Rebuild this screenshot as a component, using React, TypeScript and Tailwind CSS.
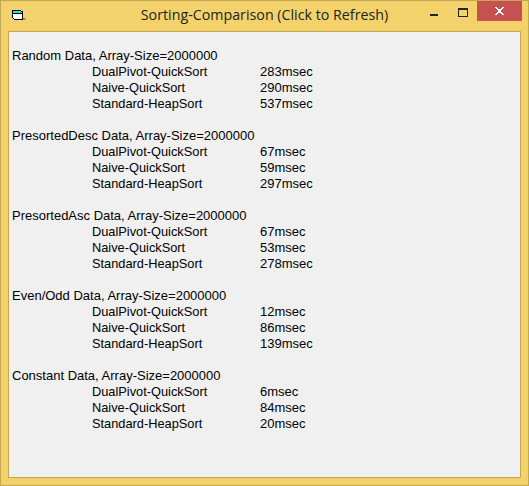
const results = [
  {
    title: 'Random Data, Array-Size=2000000',
    rows: [
      ['DualPivot-QuickSort', '283msec'],
      ['Naive-QuickSort', '290msec'],
      ['Standard-HeapSort', '537msec'],
    ],
  },
  {
    title: 'PresortedDesc Data, Array-Size=2000000',
    rows: [
      ['DualPivot-QuickSort', '67msec'],
      ['Naive-QuickSort', '59msec'],
      ['Standard-HeapSort', '297msec'],
    ],
  },
  {
    title: 'PresortedAsc Data, Array-Size=2000000',
    rows: [
      ['DualPivot-QuickSort', '67msec'],
      ['Naive-QuickSort', '53msec'],
      ['Standard-HeapSort', '278msec'],
    ],
  },
  {
    title: 'Even/Odd Data, Array-Size=2000000',
    rows: [
      ['DualPivot-QuickSort', '12msec'],
      ['Naive-QuickSort', '86msec'],
      ['Standard-HeapSort', '139msec'],
    ],
  },
  {
    title: 'Constant Data, Array-Size=2000000',
    rows: [
      ['DualPivot-QuickSort', '6msec'],
      ['Naive-QuickSort', '84msec'],
      ['Standard-HeapSort', '20msec'],
    ],
  },
];

function AppIcon() {
  return (
    <svg width="14" height="12" viewBox="0 0 14 12" shapeRendering="crispEdges">
      <path d="M1 4h9v5H2V8H1z" fill="#fff" />
      <path d="M1 1h8v1h1v1H1z" fill="#1ee6e6" />
      <path d="M0 0h9v1H0zM0 1h1v7H0zM1 8h1v1H1zM2 9h9v1H2zM9 1h2v1H9zM10 2h1v7h-1zM1 3h9v1H1z" fill="#000" />
      <path d="M11 8h3v1h-1v1h-2z" fill="#8a8a8a" />
    </svg>
  );
}

export default function App() {
  return (
    <div className="flex h-[486px] w-[529px] flex-col border border-[#c3a651] bg-[#f4d26b] font-['Liberation_Sans',sans-serif] text-black">
      <div className="relative flex h-[30px] shrink-0 items-start">
        <div className="mt-[9px] ml-[11px]">
          <AppIcon />
        </div>
        <span className="absolute top-[4px] left-0 w-full text-center font-['Open_Sans',sans-serif] text-[14.25px] leading-[20px] text-[#222]">
          Sorting-Comparison (Click to Refresh)
        </span>
        <div className="ml-auto mr-[6px] flex items-start">
          <div className="flex h-[20px] w-[30px] items-center justify-center pt-[8px]">
            <div className="h-[2px] w-[8px] bg-[#222]" />
          </div>
          <div className="flex h-[20px] w-[28px] items-center justify-center pt-[3px]">
            <div className="h-[9px] w-[10px] border border-t-2 border-[#222]" />
          </div>
          <div className="flex h-[20px] w-[45px] items-center justify-center bg-[#c75050]">
            <svg width="9" height="8" viewBox="0 0 9 8" shapeRendering="crispEdges" fill="#fff">
              <path d="M0 0h2v1h1v1h3V1h1V0h2v1H8v1H7v1H6v2h1v1h1v1h1v1H7V7H6V6H3v1H2v1H0V7h1V6h1V5h1V3H2V2H1V1H0z" />
            </svg>
          </div>
        </div>
      </div>
      <div className="mx-[7px] mb-[7px] flex-1 border border-[#c3a651] bg-[#f0f0f0] pt-[16px] pl-[3px] text-[13px] leading-[16px]">
        {results.map((block) => (
          <section className="mb-[16px]" key={block.title}>
            <div className="whitespace-nowrap">{block.title}</div>
            {block.rows.map(([name, time]) => (
              <div className="flex pl-[80px]" key={name}>
                <span className="w-[168px] text-[12.8px]">{name}</span>
                <span>{time}</span>
              </div>
            ))}
          </section>
        ))}
      </div>
    </div>
  );
}
